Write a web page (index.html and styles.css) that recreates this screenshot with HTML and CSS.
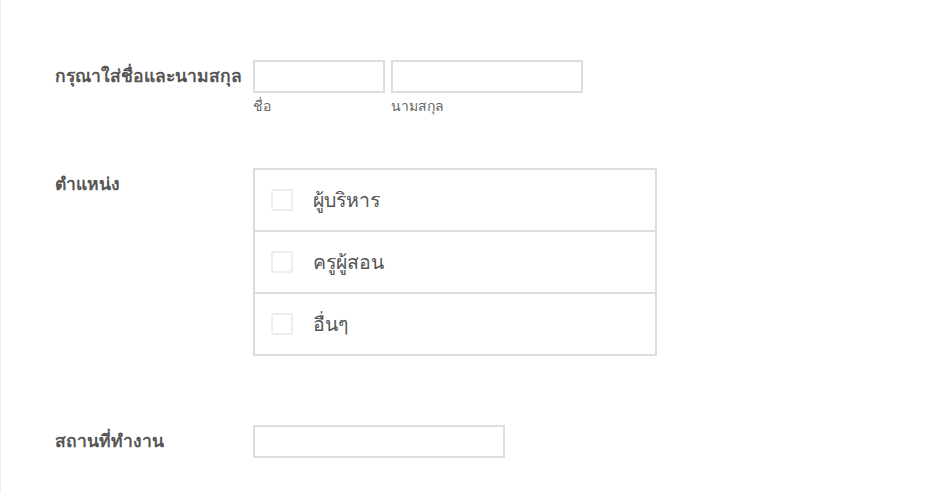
FILE: index.html
```html
<!DOCTYPE html>
<html lang="th">
<head>
    <meta charset="UTF-8">
    <title>แบบฟอร์ม</title>
    <link rel="stylesheet" href="styles.css">
</head>
<body>
    <div class="form">
        <div class="form-line line-name">
            <label class="form-label">กรุณาใส่ชื่อและนามสกุล</label>
            <div class="name-fields">
                <div class="sub-field">
                    <input type="text" class="input first">
                    <span class="sublabel">ชื่อ</span>
                </div>
                <div class="sub-field">
                    <input type="text" class="input last">
                    <span class="sublabel">นามสกุล</span>
                </div>
            </div>
        </div>

        <div class="form-line line-position">
            <label class="form-label">ตำแหน่ง</label>
            <div class="options">
                <label class="option"><span class="check"></span>ผู้บริหาร</label>
                <label class="option"><span class="check"></span>ครูผู้สอน</label>
                <label class="option"><span class="check"></span>อื่นๆ</label>
            </div>
        </div>

        <div class="form-line line-work">
            <label class="form-label">สถานที่ทำงาน</label>
            <input type="text" class="input work">
        </div>
    </div>
</body>
</html>
```

FILE: styles.css
```css
body {
    margin: 0;
    background-color: #fff;
    font-family: "DejaVu Sans", "Noto Sans", sans-serif;
    color: #555;
}
.form {
    border-left: 1px solid #f0f0f0;
    min-height: 493px;
    box-sizing: border-box;
    padding: 60px 0 0 54px;
}
.form-line {
    display: flex;
    align-items: flex-start;
}
.form-label {
    width: 198px;
    flex-shrink: 0;
    font-size: 17.5px;
    font-weight: bold;
    color: #555;
    padding-top: 2px;
}
.input {
    display: block;
    box-sizing: border-box;
    height: 33px;
    margin: 0;
    border: 2px solid #ddd;
    background: #fff;
    outline: none;
}
.name-fields {
    display: flex;
    gap: 6px;
}
.input.first {
    width: 132px;
}
.input.last {
    width: 192px;
}
.sublabel {
    display: block;
    font-size: 14px;
    line-height: 14px;
    color: #666;
    padding-top: 6px;
}

.line-position {
    margin-top: 55px;
}
.options {
    width: 404px;
    box-sizing: border-box;
    border: 2px solid #ddd;
}
.option {
    display: flex;
    align-items: center;
    height: 60px;
    padding-left: 16px;
    font-size: 19.5px;
    color: #555;
}
.option + .option {
    border-top: 2px solid #ddd;
}
.check {
    width: 22px;
    height: 22px;
    box-sizing: border-box;
    border: 2px solid #eee;
    border-radius: 3px;
    margin-right: 20px;
}

.line-work {
    margin-top: 69px;
}
.input.work {
    width: 252px;
}
```
